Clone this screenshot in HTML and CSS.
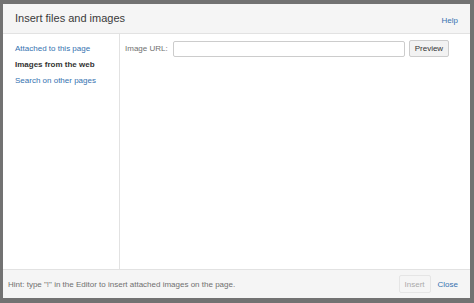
FILE: index.html
```html
<!DOCTYPE html>
<html lang="en">
<head>
  <meta charset="UTF-8">
  <title>Insert files and images</title>
  <link rel="stylesheet" href="styles.css">
</head>
<body>

<div class="dialog">
  <div class="dialog-header">
    <h2>Insert files and images</h2>
    <a class="help-link" href="#">Help</a>
  </div>

  <div class="dialog-body">
    <ul class="side-nav">
      <li><a href="#">Attached to this page</a></li>
      <li class="selected">Images from the web</li>
      <li><a href="#">Search on other pages</a></li>
    </ul>

    <div class="panel">
      <div class="url-row">
        <label for="imageUrl">Image URL:</label>
        <input type="text" id="imageUrl">
        <button type="button" class="btn">Preview</button>
      </div>
    </div>
  </div>

  <div class="dialog-footer">
    <span class="hint">Hint: type "!" in the Editor to insert attached images on the page.</span>
    <button type="button" class="btn" disabled>Insert</button>
    <a class="close-link" href="#">Close</a>
  </div>
</div>

</body>
</html>
```

FILE: styles.css
```css
html, body {
  margin: 0;
  height: 100%;
}
body {
  font-family: "Liberation Sans", Arial, sans-serif;
  background: #727272;
  padding: 4px 4px 5px 3px;
  box-sizing: border-box;
  display: flex;
}
.dialog {
  flex: 1;
  display: flex;
  flex-direction: column;
  background: white;
}
.dialog-header {
  height: 30px;
  box-sizing: border-box;
  background: #f5f5f5;
  border-bottom: 1px solid #e2e2e2;
  display: flex;
  align-items: center;
  padding: 0 12px 0 12px;
}
.dialog-header h2 {
  margin: 0;
  flex: 1;
  font-size: 11px;
  font-weight: normal;
  color: #3a3a3a;
  padding-bottom: 2px;
}
a {
  color: #3572b0;
  text-decoration: none;
}
.help-link {
  font-size: 8px;
  margin-top: 4px;
}
.dialog-body {
  flex: 1;
  display: flex;
}
.side-nav {
  list-style: none;
  margin: 0;
  padding: 7px 0 0 12px;
  width: 104px;
  border-right: 1px solid #e2e2e2;
  font-size: 8px;
}
.side-nav li {
  height: 16px;
  line-height: 16px;
}
.side-nav .selected {
  color: #333;
  font-weight: bold;
}
.panel {
  flex: 1;
  padding: 6px 0 0 5px;
}
.url-row {
  display: flex;
  align-items: center;
  font-size: 8px;
}
.url-row label {
  color: #707070;
  margin-right: 5px;
}
.url-row input {
  width: 232px;
  height: 16px;
  box-sizing: border-box;
  border: 1px solid #ccc;
  border-radius: 2px;
  margin: 0 4px 0 0;
  padding: 0 3px;
}
.btn {
  font-family: inherit;
  font-size: 8px;
  color: #333;
  background: #f2f2f2;
  border: 1px solid #ccc;
  border-radius: 2px;
  height: 17px;
  padding: 0 5px;
}
.btn:disabled {
  color: #aaa;
  background: #f5f5f5;
  border-color: #e5e5e5;
}
.dialog-footer {
  height: 29px;
  box-sizing: border-box;
  background: #f5f5f5;
  border-top: 1px solid #e2e2e2;
  display: flex;
  align-items: center;
  padding: 0 12px 0 5px;
  font-size: 8px;
}
.hint {
  flex: 1;
  color: #707070;
}
.dialog-footer .btn {
  height: 18px;
  margin-right: 7px;
}
.close-link {
  font-size: 8px;
}
```
